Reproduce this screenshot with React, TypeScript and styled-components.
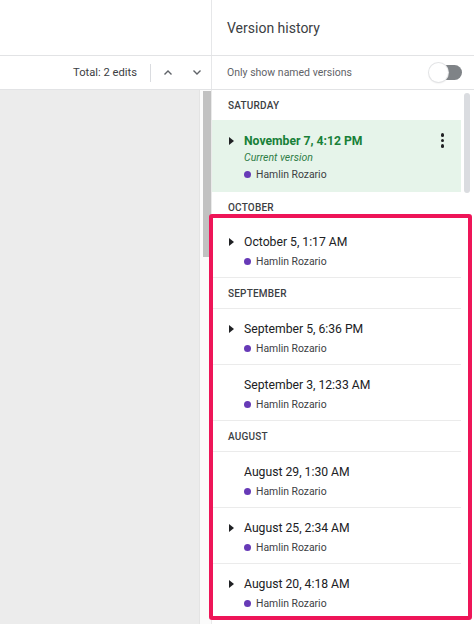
import React from "react";
import styled, { createGlobalStyle } from "styled-components";

const Global = createGlobalStyle`
  html, body { margin: 0; padding: 0; background: #ffffff; }
  body { font-family: Roboto, "Liberation Sans", Arial, sans-serif; overflow: hidden; }
  * { box-sizing: border-box; }
`;

const Page = styled.div`
  position: relative;
  width: 474px;
  height: 624px;
  display: flex;
  flex-direction: column;
  overflow: hidden;
  background: #fff;
`;

const Bar = styled.div<{ $h: number }>`
  height: ${(p) => p.$h}px;
  display: flex;
  border-bottom: 1px solid #e2e3e5;
  flex-shrink: 0;
`;

const LeftCell = styled.div`
  width: 212px;
  border-right: 1px solid #e6e7e9;
  display: flex;
  align-items: center;
  justify-content: flex-end;
  padding-right: 7px;
`;

const Title = styled.div`
  flex: 1;
  display: flex;
  align-items: center;
  padding-left: 15px;
  font-size: 14px;
  color: #3c4043;
`;

const Total = styled.span`
  font-size: 11.2px;
  color: #3c4043;
  margin-right: 13px;
`;

const VDivider = styled.span`
  width: 1px;
  height: 18px;
  background: #dadce0;
  margin-right: 9px;
`;

const ChevronBtn = styled.span<{ $gap?: number }>`
  width: 15px;
  height: 15px;
  display: flex;
  align-items: center;
  justify-content: center;
  margin-left: ${(p) => p.$gap ?? 0}px;
`;

const FilterRow = styled.div`
  flex: 1;
  display: flex;
  align-items: center;
  justify-content: space-between;
  padding-left: 15px;
  padding-right: 12px;
  font-size: 10.5px;
  color: #5f6368;
`;

const Toggle = styled.span`
  position: relative;
  width: 34px;
  height: 19px;
  display: inline-block;
`;

const Track = styled.span`
  position: absolute;
  left: 6px;
  right: 0;
  top: 2px;
  height: 15px;
  border-radius: 7.5px;
  background: #7f8387;
`;

const Knob = styled.span`
  position: absolute;
  left: 1px;
  top: 0;
  width: 19px;
  height: 19px;
  border-radius: 50%;
  background: #fff;
  box-shadow: 0 0 0 1px #e3e4e6, 0 1px 2px rgba(0, 0, 0, 0.15);
`;

const Body = styled.div`
  flex: 1;
  display: flex;
  min-height: 0;
`;

const Canvas = styled.div`
  width: 199px;
  background: #ececec;
`;

const Gutter = styled.div`
  width: 13px;
  background: #fbfbfb;
  border-left: 1px solid #e4e4e4;
  border-right: 1px solid #eaeaea;
  padding: 1px 0 0 3px;
`;

const Thumb = styled.div`
  width: 8px;
  height: 166px;
  background: #c1c1c1;
`;

const Panel = styled.div`
  flex: 1;
  display: flex;
  min-width: 0;
`;

const List = styled.div`
  width: 249px;
  display: flex;
  flex-direction: column;
`;

const PanelScroll = styled.div`
  width: 6px;
  height: 100px;
  margin: 3px 0 0 3px;
  border-radius: 3px;
  background: #dadce0;
`;

const SectionHead = styled.div<{ $line?: boolean }>`
  height: ${(p) => (p.$line ? 31 : 30)}px;
  display: flex;
  align-items: center;
  padding-left: 16px;
  font-size: 10px;
  font-weight: 500;
  letter-spacing: 0.2px;
  color: #3c4043;
  border-bottom: ${(p) => (p.$line ? "1px solid #ebebeb" : "none")};
  flex-shrink: 0;
`;

const Entry = styled.div<{ $current?: boolean }>`
  position: relative;
  height: ${(p) => (p.$current ? 72 : 56)}px;
  padding: ${(p) => (p.$current ? 12 : 11)}px 0 0 32px;
  background: ${(p) => (p.$current ? "#e6f4ea" : "transparent")};
  border-bottom: ${(p) => (p.$current ? "none" : "1px solid #ebebeb")};
  display: flex;
  flex-direction: column;
  flex-shrink: 0;
`;

const EntryLine = styled.div`
  position: relative;
  height: 17px;
  display: flex;
  align-items: center;
`;

const Arrow = styled.span`
  position: absolute;
  left: -15px;
  top: 5px;
  width: 0;
  height: 0;
  border-top: 4px solid transparent;
  border-bottom: 4px solid transparent;
  border-left: 5px solid #202124;
`;

const When = styled.span<{ $current?: boolean }>`
  font-size: 12.2px;
  font-weight: ${(p) => (p.$current ? 700 : 400)};
  color: ${(p) => (p.$current ? "#188038" : "#202124")};
`;

const Note = styled.div`
  height: 17px;
  display: flex;
  align-items: center;
  font-size: 10.5px;
  font-style: italic;
  color: #2e7d46;
`;

const Author = styled.div<{ $tight?: boolean }>`
  height: 17px;
  margin-top: ${(p) => (p.$tight ? 0 : 3)}px;
  display: flex;
  align-items: center;
  font-size: 10.4px;
  color: #3c4043;
`;

const Dot = styled.span`
  width: 7px;
  height: 7px;
  border-radius: 50%;
  background: #673ab7;
  margin: 0 5px 0 0;
`;

const Kebab = styled.span`
  position: absolute;
  right: 17px;
  top: 13px;
  display: flex;
  flex-direction: column;
  gap: 2px;
`;

const KDot = styled.span`
  width: 3.5px;
  height: 3.5px;
  border-radius: 50%;
  background: #202124;
`;

const Highlight = styled.div`
  position: absolute;
  left: 209px;
  top: 214px;
  width: 263px;
  height: 406px;
  border: 4px solid #ee1558;
  border-radius: 3px;
  pointer-events: none;
`;

const Chevron = ({ up }: { up?: boolean }) => (
  <svg width="10" height="7" viewBox="0 0 10 7">
    <path
      d={up ? "M1.5 5.5 L5 2 L8.5 5.5" : "M1.5 1.5 L5 5 L8.5 1.5"}
      fill="none"
      stroke="#5f6368"
      strokeWidth="1.4"
    />
  </svg>
);

type Item =
  | { kind: "head"; label: string; line?: boolean }
  | { kind: "entry"; when: string; arrow?: boolean; current?: boolean };

const items: Item[] = [
  { kind: "head", label: "SATURDAY" },
  { kind: "entry", when: "November 7, 4:12 PM", arrow: true, current: true },
  { kind: "head", label: "OCTOBER" },
  { kind: "entry", when: "October 5, 1:17 AM", arrow: true },
  { kind: "head", label: "SEPTEMBER", line: true },
  { kind: "entry", when: "September 5, 6:36 PM", arrow: true },
  { kind: "entry", when: "September 3, 12:33 AM" },
  { kind: "head", label: "AUGUST", line: true },
  { kind: "entry", when: "August 29, 1:30 AM" },
  { kind: "entry", when: "August 25, 2:34 AM", arrow: true },
  { kind: "entry", when: "August 20, 4:18 AM", arrow: true },
];

export default function App() {
  return (
    <>
      <Global />
      <Page>
        <Bar $h={56}>
          <LeftCell />
          <Title>Version history</Title>
        </Bar>
        <Bar $h={34}>
          <LeftCell>
            <Total>Total: 2 edits</Total>
            <VDivider />
            <ChevronBtn>
              <Chevron up />
            </ChevronBtn>
            <ChevronBtn $gap={14}>
              <Chevron />
            </ChevronBtn>
          </LeftCell>
          <FilterRow>
            <span>Only show named versions</span>
            <Toggle>
              <Track />
              <Knob />
            </Toggle>
          </FilterRow>
        </Bar>
        <Body>
          <Canvas />
          <Gutter>
            <Thumb />
          </Gutter>
          <Panel>
            <List>
              {items.map((it, i) =>
                it.kind === "head" ? (
                  <SectionHead key={i} $line={it.line}>
                    {it.label}
                  </SectionHead>
                ) : (
                  <Entry key={i} $current={it.current}>
                    <EntryLine>
                      {it.arrow && <Arrow />}
                      <When $current={it.current}>{it.when}</When>
                    </EntryLine>
                    {it.current && <Note>Current version</Note>}
                    <Author $tight={it.current}>
                      <Dot />
                      Hamlin Rozario
                    </Author>
                    {it.current && (
                      <Kebab>
                        <KDot />
                        <KDot />
                        <KDot />
                      </Kebab>
                    )}
                  </Entry>
                )
              )}
            </List>
            <PanelScroll />
          </Panel>
        </Body>
        <Highlight />
      </Page>
    </>
  );
}
